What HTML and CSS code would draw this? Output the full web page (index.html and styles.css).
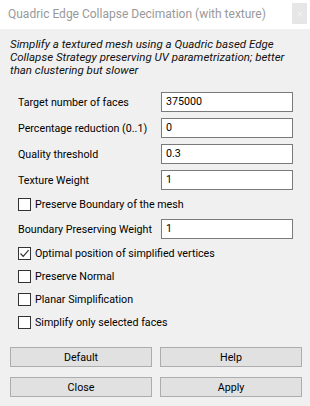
FILE: index.html
```html
<!DOCTYPE html>
<html>
<head>
<meta charset="utf-8">
<link rel="stylesheet" href="styles.css">
</head>
<body>
<div class="window">
  <div class="titlebar">
    <span class="title">Quadric Edge Collapse Decimation (with texture)</span>
    <span class="close"><svg width="6" height="6" viewBox="0 0 6 6"><path d="M0.5 0.5L5.5 5.5M5.5 0.5L0.5 5.5" stroke="#f4f4f4" stroke-width="1"/></svg></span>
  </div>
  <div class="body">
    <p class="desc">Simplify a textured mesh using a Quadric based Edge Collapse Strategy preserving UV parametrization; better than clustering but slower</p>
    <div class="form">
      <div class="row field"><label>Target number of faces</label><div class="input">375000</div></div>
      <div class="row field"><label>Percentage reduction (0..1)</label><div class="input">0</div></div>
      <div class="row field"><label>Quality threshold</label><div class="input">0.3</div></div>
      <div class="row field"><label>Texture Weight</label><div class="input">1</div></div>
      <div class="row check"><span class="box"></span><span>Preserve Boundary of the mesh</span></div>
      <div class="row field"><label>Boundary Preserving Weight</label><div class="input">1</div></div>
      <div class="row check"><span class="box"><svg width="11" height="11" viewBox="0 0 11 11"><path d="M1.5 5.5L4.2 8.3L9.6 2.2" fill="none" stroke="#333" stroke-width="1.2"/></svg></span><span>Optimal position of simplified vertices</span></div>
      <div class="row check"><span class="box"></span><span>Preserve Normal</span></div>
      <div class="row check"><span class="box"></span><span>Planar Simplification</span></div>
      <div class="row check"><span class="box"></span><span>Simplify only selected faces</span></div>
    </div>
    <div class="buttons">
      <button class="btn">Default</button>
      <button class="btn">Help</button>
      <button class="btn">Close</button>
      <button class="btn">Apply</button>
    </div>
  </div>
</div>
</body>
</html>
```
FILE: styles.css
```css
html, body {
  margin: 0;
  padding: 0;
}
body {
  width: 310px;
  height: 406px;
  background: #f0f0f0;
  font-family: Roboto, "Noto Sans", sans-serif;
  font-size: 10.7px;
  color: #000;
  overflow: hidden;
}
.window {
  display: flex;
  flex-direction: column;
  height: 406px;
}
.titlebar {
  height: 29px;
  background: #fff;
  display: flex;
  align-items: center;
  justify-content: space-between;
  padding-left: 8px;
  box-sizing: border-box;
}
.title {
  color: #999;
  font-size: 12px;
  margin-top: -1px;
}
.close {
  width: 15px;
  height: 21px;
  background: #e6e6e6;
  margin-right: 3px;
  margin-top: -2px;
  display: flex;
  align-items: center;
  justify-content: center;
}
.body {
  padding: 9px 8px 0 10px;
}
.desc {
  margin: 0;
  font-style: italic;
  font-size: 11.5px;
  line-height: 13px;
  width: 280px;
  color: #111;
}
.form {
  margin-top: 12px;
  padding-left: 8px;
  display: flex;
  flex-direction: column;
}
.row {
  display: flex;
  align-items: center;
}
.field {
  height: 26px;
}
.field label {
  width: 143px;
  flex: none;
  white-space: nowrap;
}
.input {
  width: 132px;
  height: 20px;
  box-sizing: border-box;
  border: 1px solid #7a7a7a;
  background: #fff;
  padding-left: 4px;
  line-height: 18px;
}
.check {
  height: 23px;
}
.box {
  width: 13px;
  height: 13px;
  box-sizing: border-box;
  border: 1px solid #333;
  background: #fff;
  margin-right: 4px;
  display: flex;
  align-items: center;
  justify-content: center;
}
.buttons {
  margin-top: 13px;
  display: grid;
  grid-template-columns: 142px 142px;
  column-gap: 8px;
  row-gap: 10px;
}
.btn {
  height: 20px;
  background: #e1e1e1;
  border: 1px solid #adadad;
  font-family: Roboto, "Noto Sans", sans-serif;
  font-size: 10.7px;
  color: #000;
  padding: 0;
  margin: 0;
}
```
